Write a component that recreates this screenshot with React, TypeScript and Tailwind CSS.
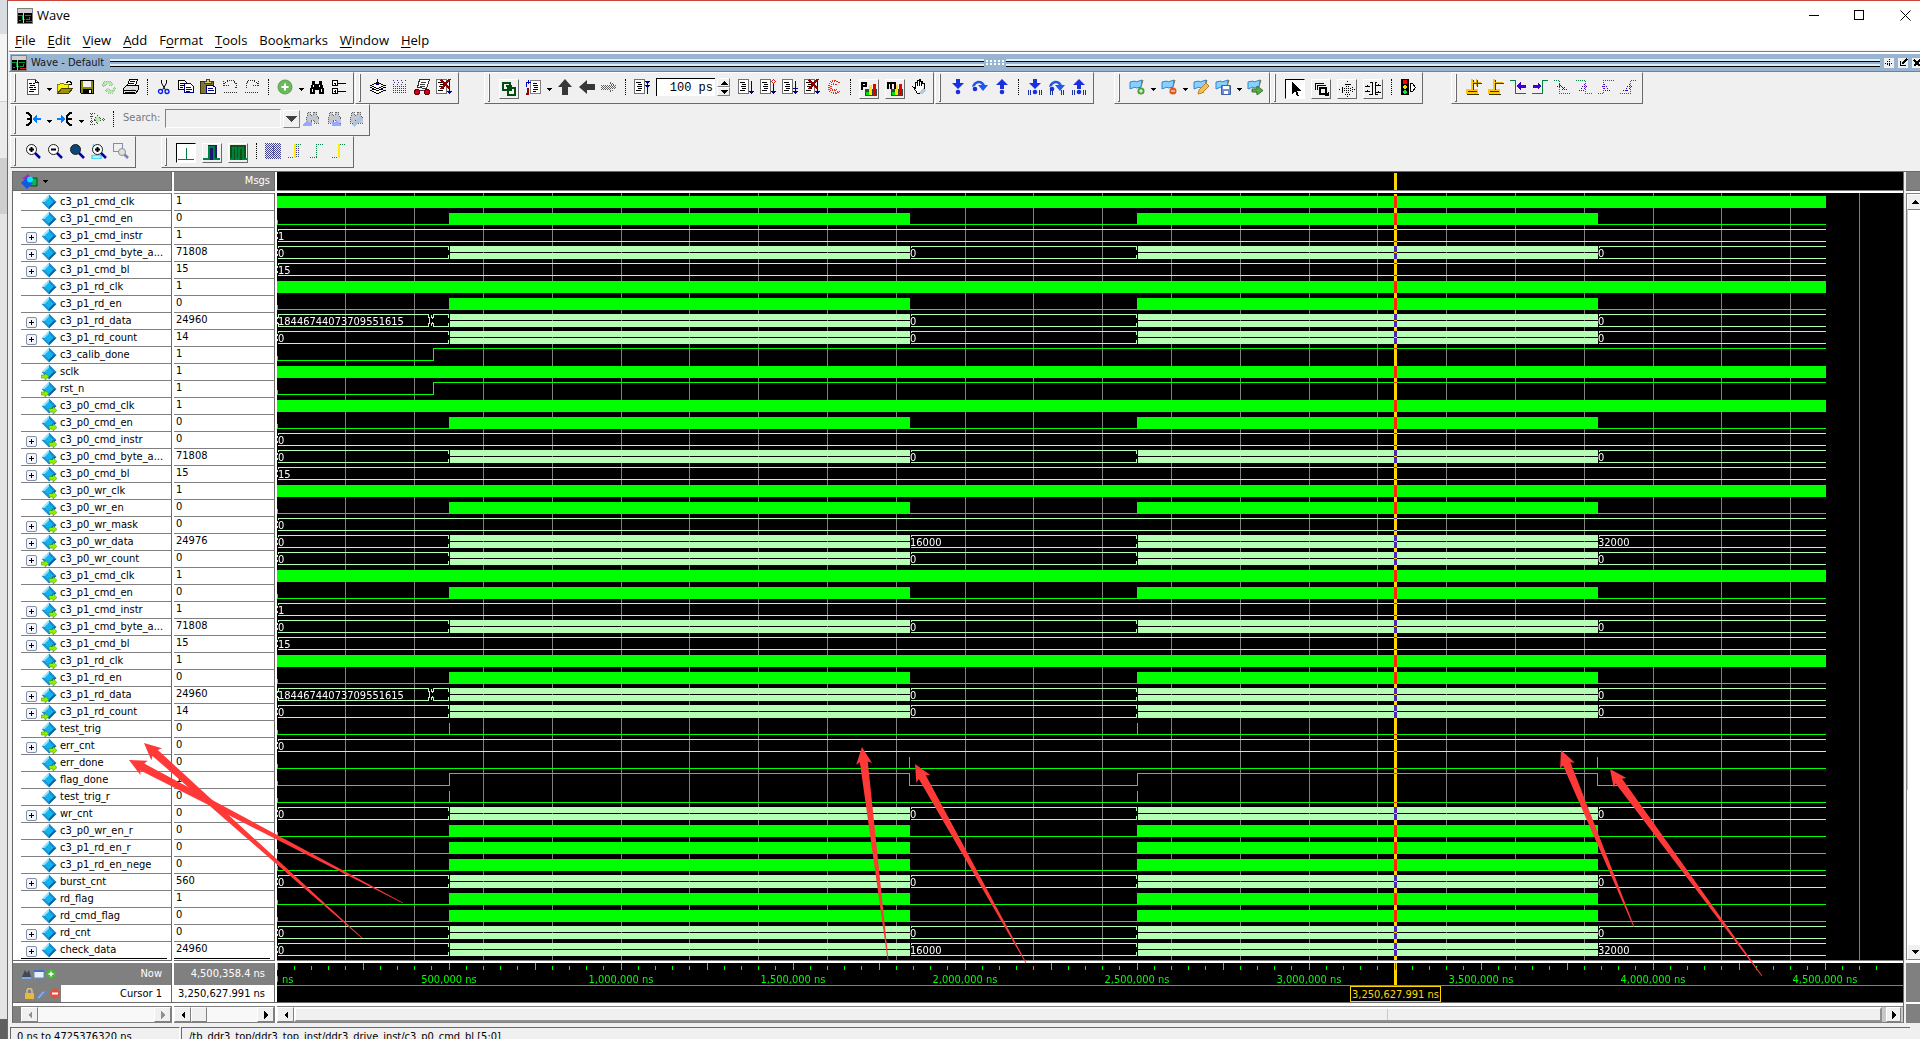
import type { ReactNode } from "react";

type Row = {
  name: string;
  value: string;
  kind: "clk" | "burst" | "const" | "bus" | "rddata" | "rise" | "trig" | "done" | "flag";
  dir?: "in" | "out";
  labels?: string[];
};

const ZERO = ["0", "0", "0"];

const ROWS: Row[] = [
  { name: "c3_p1_cmd_clk", value: "1", kind: "clk" },
  { name: "c3_p1_cmd_en", value: "0", kind: "burst" },
  { name: "c3_p1_cmd_instr", value: "1", kind: "const", labels: ["1"] },
  { name: "c3_p1_cmd_byte_a...", value: "71808", kind: "bus", labels: ZERO },
  { name: "c3_p1_cmd_bl", value: "15", kind: "const", labels: ["15"] },
  { name: "c3_p1_rd_clk", value: "1", kind: "clk" },
  { name: "c3_p1_rd_en", value: "0", kind: "burst" },
  { name: "c3_p1_rd_data", value: "24960", kind: "rddata", labels: ["18446744073709551615", "0", "0"] },
  { name: "c3_p1_rd_count", value: "14", kind: "bus", labels: ZERO },
  { name: "c3_calib_done", value: "1", kind: "rise" },
  { name: "sclk", value: "1", kind: "clk", dir: "in" },
  { name: "rst_n", value: "1", kind: "rise", dir: "in" },
  { name: "c3_p0_cmd_clk", value: "1", kind: "clk", dir: "out" },
  { name: "c3_p0_cmd_en", value: "0", kind: "burst", dir: "out" },
  { name: "c3_p0_cmd_instr", value: "0", kind: "const", dir: "out", labels: ["0"] },
  { name: "c3_p0_cmd_byte_a...", value: "71808", kind: "bus", dir: "out", labels: ZERO },
  { name: "c3_p0_cmd_bl", value: "15", kind: "const", dir: "out", labels: ["15"] },
  { name: "c3_p0_wr_clk", value: "1", kind: "clk", dir: "out" },
  { name: "c3_p0_wr_en", value: "0", kind: "burst", dir: "out" },
  { name: "c3_p0_wr_mask", value: "0", kind: "const", dir: "out", labels: ["0"] },
  { name: "c3_p0_wr_data", value: "24976", kind: "bus", dir: "out", labels: ["0", "16000", "32000"] },
  { name: "c3_p0_wr_count", value: "0", kind: "bus", dir: "in", labels: ZERO },
  { name: "c3_p1_cmd_clk", value: "1", kind: "clk", dir: "out" },
  { name: "c3_p1_cmd_en", value: "0", kind: "burst", dir: "out" },
  { name: "c3_p1_cmd_instr", value: "1", kind: "const", dir: "out", labels: ["1"] },
  { name: "c3_p1_cmd_byte_a...", value: "71808", kind: "bus", dir: "out", labels: ZERO },
  { name: "c3_p1_cmd_bl", value: "15", kind: "const", dir: "out", labels: ["15"] },
  { name: "c3_p1_rd_clk", value: "1", kind: "clk", dir: "out" },
  { name: "c3_p1_rd_en", value: "0", kind: "burst", dir: "out" },
  { name: "c3_p1_rd_data", value: "24960", kind: "rddata", dir: "in", labels: ["18446744073709551615", "0", "0"] },
  { name: "c3_p1_rd_count", value: "14", kind: "bus", dir: "in", labels: ZERO },
  { name: "test_trig", value: "0", kind: "trig", dir: "in" },
  { name: "err_cnt", value: "0", kind: "const", dir: "out", labels: ["0"] },
  { name: "err_done", value: "0", kind: "done", dir: "out" },
  { name: "flag_done", value: "1", kind: "flag" },
  { name: "test_trig_r", value: "0", kind: "trig" },
  { name: "wr_cnt", value: "0", kind: "bus", labels: ZERO },
  { name: "c3_p0_wr_en_r", value: "0", kind: "burst" },
  { name: "c3_p1_rd_en_r", value: "0", kind: "burst" },
  { name: "c3_p1_rd_en_nege", value: "0", kind: "burst" },
  { name: "burst_cnt", value: "560", kind: "bus", labels: ZERO },
  { name: "rd_flag", value: "1", kind: "burst" },
  { name: "rd_cmd_flag", value: "0", kind: "burst" },
  { name: "rd_cnt", value: "0", kind: "bus", labels: ZERO },
  { name: "check_data", value: "24960", kind: "bus", labels: ["0", "16000", "32000"] },
];

const ROW_H = 17;
const END = 1549;
// burst windows, in pixels from the left edge of the wave pane
const BURSTS = [
  [172, 633],
  [860, 1321],
];
const GREEN = "#00ff00";
const PALE = "#b4ffb4";

/* ---------- icons ---------- */

function Ico({ children, w = 16, h = 16 }: { children: ReactNode; w?: number; h?: number }) {
  return (
    <svg width={w} height={h} viewBox={`0 0 ${w} ${h}`} fill="none" stroke="none" shapeRendering="crispEdges" aria-hidden="true">
      {children}
    </svg>
  );
}

const AppIcon = ({ bar = "#ffe000" }: { bar?: string }) => (
  <Ico>
    <path d="M0 0h16v16H0z" fill="#808080" />
    <path d="M1 1h14v4H1z" fill="#d0d0d0" />
    <path d="M1 5h14v10H1z" fill="#000" />
    <path d="M1 7.500h4v4h3M8 7.500h6M9 11.500h3v-3M2 12.500h2" stroke="#00a030" />
    <path d="M6.500 5v10" stroke={bar} />
    <path d="M9 13.500h6" stroke="#d02020" />
  </Ico>
);

const NewDoc = () => (
  <Ico>
    <path d="M2.500.5h8l3 3v12h-11z" fill="#fff" stroke="#606060" />
    <path d="M10.500.5v3h3" stroke="#000" />
    <path d="M4 4.500h3M8 4.500h2M5 6.500h5M4 8.500h4M9 8.500h2M5 10.500h6M4 12.500h5" stroke="#000" />
  </Ico>
);
const Open = () => (
  <Ico>
    <path d="M.5 14.500v-9h2l1-1h3l1 1h4v4" fill="#fff200" stroke="#808000" />
    <path d="M.5 14.500l4-5h11l-4 5z" fill="#a09000" stroke="#404000" />
    <path d="M9 3.500h1v-1h3v1h1v2M12 5.500h3" stroke="#000" />
  </Ico>
);
const Save = () => (
  <Ico>
    <path d="M1.500 1.500h13v13h-12l-1-1z" fill="#8a8a00" stroke="#000" />
    <path d="M4 2h8v6H4z" fill="#f0f0f0" />
    <path d="M4 10h9v4H4z" fill="#000" />
    <path d="M10 11h2v3h-2z" fill="#fff" />
  </Ico>
);
const Reload = () => (
  <Ico>
    <path d="M1 6l3-4h5l3 3-3 2-2-2H5L3 8zM15 9l-3 5H7l-3-3 3-2 2 2h3l1-3z" fill="#bce4b6" stroke="#8cc884" strokeDasharray="1 1" />
  </Ico>
);
const Print = () => (
  <Ico>
    <path d="M4.500 6.500l2-6h8l-2 6" fill="#fff" stroke="#000" />
    <path d="M.5 9.500l3-3h12v4l-3 4h-12z" fill="#e0e0e0" stroke="#000" />
    <path d="M7 2.500h5M6 4.500h5M1 11.500h12M2 13.500h10" stroke="#000" />
    <path d="M8 10h4v1H8z" fill="#e8e000" />
  </Ico>
);
const Cut = () => (
  <svg width="16" height="16" viewBox="0 0 16 16" fill="none" aria-hidden="true">
    <path d="M5.500 1v3l4 7M10.500 1v3l-4 7" stroke="#000" />
    <circle cx="4.500" cy="12.500" r="2" stroke="#0020e0" strokeWidth="1.300" />
    <circle cx="11" cy="12.500" r="2" stroke="#0020e0" strokeWidth="1.300" />
  </svg>
);
const Copy = () => (
  <Ico>
    <path d="M.5 1.500h6l2 2v7h-8z" fill="#fff" stroke="#000" />
    <path d="M2 4.500h4M2 6.500h4M2 8.500h3" stroke="#000" />
    <path d="M6.500 4.500h6l3 3v6h-9z" fill="#fff" stroke="#000080" />
    <path d="M8 8.500h5M8 10.500h6M8 12.500h4" stroke="#000080" />
  </Ico>
);
const Paste = () => (
  <Ico>
    <path d="M.5 2.500h13v12H.5z" fill="#807830" stroke="#303000" />
    <path d="M4 4V2h2V0h3v2h2v2z" fill="#d8d070" stroke="#404040" />
    <path d="M6.500 6.500h6l3 2v6h-9z" fill="#fff" stroke="#000080" />
    <path d="M8 9.500h5M8 11.500h6" stroke="#000080" />
  </Ico>
);
const Undo = ({ flip = false }: { flip?: boolean }) => (
  <Ico>
    <g transform={flip ? "translate(16 0) scale(-1 1)" : undefined} stroke="#303030" strokeDasharray="1 1">
      <path d="M14.500 2v5M9 6.500h6M14 5l-4-3.500H5l-3 3v4l2 3" />
      <path d="M1 13.500h14" />
    </g>
  </Ico>
);
const AddRound = () => (
  <svg width="16" height="16" viewBox="0 0 16 16" aria-hidden="true">
    <circle cx="8" cy="8" r="7" fill="#6cb85c" stroke="#58a04c" />
    <path d="M8 4.500v7M4.500 8h7" stroke="#fff" strokeWidth="2" />
  </svg>
);
const Binoculars = () => (
  <Ico>
    <path d="M3 2h3v3h4V2h3v3l2 5v5h-5v-4H6v4H1v-5l2-5z" fill="#000" />
    <path d="M4.500 6v2M3.500 10v3M10.500 6v2M12.500 10v3" stroke="#fff" />
  </Ico>
);
const Tree = () => (
  <Ico>
    <path d="M1.500 1.500h5v5h-5zM1.500 9.500h5v5h-5z" fill="#fff" stroke="#000" />
    <path d="M3 4.500h2M4.500 3.500v2M3 12.500h2M4.500 11v3M7 4.500h8M7 12.500h8" stroke="#000" />
  </Ico>
);
const Layers = () => (
  <Ico>
    <path d="M.5 11.500l7-3 7 3-7 3z" fill="#fff" stroke="#000" />
    <path d="M.5 8.500l7-3 7 3-7 3z" fill="#fff" stroke="#000" />
    <path d="M.5 6.500l7-3 7 3-7 3z" fill="#fff" stroke="#000" />
    <path d="M7.500 0v6M5 4.500h5M6 5.500h3" stroke="#0000a0" />
  </Ico>
);
const Rain = () => (
  <Ico>
    <path d="M1 1.500h14M2 3.500h12M1 5.500h14" stroke="#303090" strokeDasharray="1 3" />
    <path d="M1 7.500h14M1 9.500h14M1 11.500h14M1 13.500h14" stroke="#404040" strokeDasharray="1 1" />
  </Ico>
);
const Cart = () => (
  <Ico>
    <path d="M3.500 8.500l2-8h10l-3 9z" fill="#fff" stroke="#303030" />
    <path d="M7 3.500h5M6 5.500h5M6 7.500h5M1 11.500h13" stroke="#404040" />
    <circle cx="3" cy="13" r="2.500" fill="#d00020" stroke="#600" />
    <circle cx="13" cy="13" r="2.500" fill="#d00020" stroke="#600" />
  </Ico>
);
const RunDoc = ({ mode = "plain" }: { mode?: "plain" | "dot" | "step" | "kill" | "up" }) => (
  <Ico>
    <path d="M.5.5h10v14H.5z" fill="#fff" stroke="#707070" />
    <path d="M2 3.500h5M4 5.500h4M3 7.500h5M4 9.500h4M2 11.500h5" stroke="#000" />
    <path d="M13.500 2v13" stroke="#000080" />
    {mode === "up" ? <path d="M11 2.500h5M12 3.500h3M11 6.500h5M12 7.500h3" stroke="#000080" /> : <path d="M11 12.500h5M12 13.500h3" stroke="#000080" />}
    {mode === "dot" && <path d="M13.500.5l2 2-2 2-2-2z" fill="#fff" stroke="#e02020" />}
    {mode === "step" && <path d="M11 9.500h5" stroke="#000080" />}
    {mode === "kill" && <path d="M5 1l9 9M14 0L5 10" stroke="#8c0000" strokeWidth="2" />}
  </Ico>
);
const Link2 = () => (
  <Ico>
    <path d="M2 2h7v7H2zM7 7h7v7H7zM5 5h5v5" stroke="#004c10" strokeWidth="2" />
  </Ico>
);
const RestartDoc = () => (
  <Ico>
    <path d="M5.500 1.500h10v13h-10z" fill="#fff" stroke="#808080" />
    <path d="M8 4.500h4M8 6.500h5M9 8.500h4M8 10.500h5M8 12.500h3" stroke="#000" />
    <path d="M1.500 8V3h4M3 1v4" stroke="#0000c0" />
    <path d="M1 14.500h2V9" stroke="#900000" strokeWidth="2" />
  </Ico>
);
const BigArrow = ({ turn }: { turn: string }) => (
  <svg width="16" height="16" viewBox="0 0 16 16" aria-hidden="true">
    <path transform={turn} d="M8 0l7 8h-4v8H5V8H1z" fill="#383838" />
  </svg>
);
const GreyArrow = () => (
  <Ico>
    <path d="M0 6.500h9M1 7.500h13M0 8.500h16M1 9.500h13M0 10.500h9M9 3.500h2M9 4.500h3M10 5.500h4M9 11.500h4M9 12.500h2M10 6.500h5" stroke="#606060" strokeDasharray="1 1" />
  </Ico>
);
const Stop = () => (
  <Ico>
    <path d="M13 4a6 6 0 1 0 0 8M10 6a3 3 0 1 0 0 4" stroke="#e03020" strokeWidth="2" strokeDasharray="1 1" />
  </Ico>
);
const Profile = ({ mem = false }: { mem?: boolean }) => (
  <Ico>
    <path d="M4 8h12v7H4z" fill="#404040" />
    <path d="M5 11h3v3H5z" fill="#00e000" />
    <path d="M8 4h3v10H8z" fill="#f8e800" />
    <path d="M12 3h3v11h-3z" fill="#e00000" />
    {mem ? <path d="M1 8V2h3v6M4 2h4v6" stroke="#000" strokeWidth="2" /> : <path d="M1 9V2h4v3H1" stroke="#000" strokeWidth="2" />}
  </Ico>
);
const Hand = () => (
  <Ico>
    <path d="M2.500 8.500l2 1v-6h2v-2h2v-1h1v2h2v2h2v6l-2 4h-5z" fill="#fff" stroke="#000" />
    <path d="M6.500 3v4M8.500 2v5M10.500 3v4" stroke="#000" />
    <path d="M7 14l5-5 3 3-4 3z" fill="#b0c8e8" />
  </Ico>
);
const Step = ({ kind, bars = false }: { kind: "in" | "over" | "out"; bars?: boolean }) => (
  <svg width="16" height="16" viewBox="0 0 16 16" fill="#1830e0" aria-hidden="true">
    {kind === "in" && <path d="M6 0h4v4h4L8 10 2 4h4z" />}
    {kind === "out" && <path d="M6 10h4V6h4L8 0 2 6h4z" />}
    {kind === "over" && <path d="M0 8C1 1 10-1 13 6h3l-5 6-5-6h4C8 3 4 4 3 7z" fill="#2058e8" />}
    <circle cx={kind === "over" ? 3 : 8} cy={kind === "over" ? 10 : 13} r="2.300" />
    {bars && <path d="M1.500 11v5M3.500 11v5M12.500 11v5M14.500 11v5" stroke="#1830a0" />}
  </svg>
);
const Flag = ({ badge }: { badge: "add" | "del" | "edit" | "save" | "go" }) => (
  <svg width="16" height="16" viewBox="0 0 16 16" aria-hidden="true">
    <path d="M13.500 1l-4 13" stroke="#a07020" strokeWidth="2" />
    <path d="M1 3l5-1 1 1 6-2-1 7-5 1-1-1-5 2z" fill="#88d0ff" stroke="#3088d0" />
    {badge === "add" && <><circle cx="12" cy="12" r="3.500" fill="#48a030" /><path d="M12 10v4M10 12h4" stroke="#fff" /></>}
    {badge === "del" && <><circle cx="12" cy="12" r="3.500" fill="#e05820" /><path d="M10 12h4" stroke="#fff" /></>}
    {badge === "edit" && <path d="M5 15l1-4 7-7 3 3-7 7z" fill="#f0c060" stroke="#c08020" />}
    {badge === "save" && <><path d="M6.500 6.500h9v9h-9z" fill="#7090d8" stroke="#4060a0" /><path d="M8 7h6v3H8zM9 12h4v3H9z" fill="#fff" /></>}
    {badge === "go" && <path d="M5 10h5V7l6 4.500-6 4.500v-3H5z" fill="#60a850" stroke="#307828" />}
  </svg>
);
const Pointer = () => (
  <Ico>
    <path d="M5 1v12l3-3 2 5h2l-2-5h4z" fill="#000" />
  </Ico>
);
const ZoomMode = () => (
  <Ico>
    <path d="M2.500 9V2.500H11M4.500 9V4.500H13" stroke="#000" />
    <path d="M7 7h6v6H7z" stroke="#000" strokeWidth="2" />
    <path d="M11 15h5v-5z" fill="#000" />
  </Ico>
);
const PanMode = () => (
  <Ico>
    <path d="M8.500 0L6 3h5zM8.500 16L6 13h5zM0 8.500L3 6v5zM16 8.500L13 6v5zM7.500 3v10M9.500 3v10M3 7.500h10M3 9.500h10" stroke="#000" strokeDasharray="1 1" />
  </Ico>
);
const EditMode = () => (
  <Ico>
    <path d="M5 1.500h2v12H4M12 1.500h-2v12h3" stroke="#000" />
    <path d="M0 5.500h5M0 10.500h5M2.500 4v3M2.500 9v3M11 4.500h5M11 11.500h5M13.500 3v3M13.500 10v3" stroke="#000" strokeDasharray="2 1" />
  </Ico>
);
const Traffic = () => (
  <Ico>
    <path d="M1 0h8v16H1z" fill="#000" />
    <circle cx="5" cy="3" r="2.500" fill="#f00" />
    <path d="M3 8h4M5 6v4" stroke="#f0e000" strokeWidth="2" />
    <path d="M3 13h4M5 11v4" stroke="#00f040" strokeWidth="2" />
    <path d="M10.500 4.500h2l3 4-3 4h-2z" fill="#fff" stroke="#000" />
  </Ico>
);
const CursorTool = ({ minus = false }: { minus?: boolean }) => (
  <Ico>
    <path d="M6 0v11M1 11h10v3H1z" stroke="#ffc800" strokeWidth="2" />
    <path d="M7.500 1v10M1 15.500h12M2 12.500h9" stroke="#403000" />
    <path d={minus ? "M7 3.500h8" : "M7 3.500h8M10.500 0v7"} stroke="#e0b000" />
    <path d={minus ? "M8 4.500h8" : "M8 4.500h8M11.500 1v7"} stroke="#504000" />
  </Ico>
);
const EdgeTool = ({ d, arrow, solid = false }: { d: string; arrow: string; solid?: boolean }) => (
  <Ico>
    <path d={d} stroke="#008040" strokeDasharray={solid ? undefined : "1 1"} />
    <path d={arrow} fill={solid ? "#4000e0" : "none"} stroke="#4000c0" strokeDasharray={solid ? undefined : "1 1"} />
  </Ico>
);
const Merge = ({ flip = false }: { flip?: boolean }) => (
  <Ico>
    <path d={flip ? "M15 2h-2l-3 3v6l3 3h2M10 8h5" : "M1 2h2l3 3v6l-3 3H1M6 8H2"} stroke="#000" strokeWidth="2" />
    <path d={flip ? "M0 7h4V4l5 4-5 4V9H0z" : "M16 7h-4V4L7 8l5 4V9h4z"} fill="#0080ff" />
  </Ico>
);
const Spread = () => (
  <Ico>
    <path d="M1 2.500h6M1 5.500h4M1 10.500h4M1 13.500h6M2.500 3v10" stroke="#404040" strokeDasharray="1 1" />
    <path d="M8.500 4.500l3.500 4-3.500 4-3.500-4z" fill="#b8e8b0" stroke="#306030" strokeDasharray="1 1" />
    <path d="M13 8.500h3M14.500 7v3" stroke="#4040e0" strokeDasharray="1 1" />
  </Ico>
);
const FindGrey = ({ side }: { side: "l" | "r" | "t" }) => (
  <Ico>
    <path d="M5 1h2v3h3V1h3l3 8v3h-5V9H8v3H3V9z" fill="#c4c8cc" stroke="#606468" strokeDasharray="1 1" />
    {side === "l" && <path d="M0 13l5-4v2h4v4H0z" fill="#98a8ff" />}
    {side === "r" && <path d="M16 13l-5-4v2H7v4h9z" fill="#98a8ff" />}
    {side === "t" && <path d="M5 14l8-9 3 2-8 9z" fill="#b0c4e0" />}
  </Ico>
);
const Lens = ({ mode }: { mode: "in" | "out" | "full" | "fit" | "area" }) => (
  <svg width="16" height="16" viewBox="0 0 16 16" fill="none" aria-hidden="true">
    {mode === "area" && <path d="M.5.5h9v8h-9z" stroke="#202080" strokeDasharray="1 1" />}
    {mode === "fit" && <path d="M1 12.500h9v3H1zM2.500 1v6" stroke="#40e0f8" strokeWidth="1.500" />}
    <path d="M10 10l5 5" stroke={mode === "area" ? "#7080c0" : "#0000b0"} strokeWidth="2.500" />
    <circle
      cx={mode === "area" ? 9 : 6.5}
      cy={mode === "area" ? 9 : 6.5}
      r={mode === "area" ? 3.5 : 5}
      fill={mode === "full" ? "#084878" : mode === "area" ? "#e0e0e0" : "#fff"}
      stroke={mode === "area" ? "#909090" : "#202020"}
    />
    {mode !== "full" && mode !== "area" && <path d={mode === "out" ? "M4 6.500h5" : "M4 6.500h5M6.500 4v5"} stroke="#000" strokeWidth="2" />}
  </svg>
);
const Pulse = ({ fill, d }: { fill?: string; d: string }) => (
  <Ico w={18} h={18}>
    {fill && <path d={fill === "#105010" ? "M1 1h16v15H1z" : "M5 1h9v15H5z"} fill={fill} />}
    <path d={d} stroke="#008040" strokeWidth={fill ? 2 : 1} />
  </Ico>
);
const Virtual = () => (
  <Ico>
    {[0, 2, 4, 6, 8, 10, 12, 14].map((y) => (
      <path key={y} d={`M0 ${y}.5h16M1 ${y + 1}.5h15`} stroke="#404090" strokeDasharray="1 1" />
    ))}
    <path d="M8.500 3v10" stroke="#40a060" strokeDasharray="1 1" />
  </Ico>
);
const EdgeSmall = ({ color, dots = false }: { color: string; dots?: boolean }) => (
  <Ico>
    <path d="M1 14.500h7M9 1.500h6" stroke="#008040" strokeDasharray="1 1" />
    <path d="M7.500 1v14" stroke={color} strokeWidth={color === "#ffee00" ? 2 : 1} strokeDasharray={color === "#ffee00" ? undefined : "1 1"} />
    {dots && <path d="M9.500 3v11M11.500 3v11" stroke="#404090" strokeDasharray="1 1" />}
  </Ico>
);

function Diamond({ dir }: { dir?: "in" | "out" }) {
  return (
    <svg width="16" height="16" viewBox="0 0 16 16" className="block shrink-0" aria-hidden="true">
      <path d="M8 .5L.5 8H8z" fill="#9ce0f8" />
      <path d="M8 .5L15.500 8H8z" fill="#1888c8" />
      <path d="M.5 8L8 15.500V8z" fill="#2090d0" />
      <path d="M15.500 8L8 15.500V8z" fill="#086098" />
      <path d="M8 3.500L12.500 8 8 12.500 3.500 8z" fill="#10b4f0" />
      {dir === "in" && <path d="M0 11h4V9l4 3.500L4 16v-2H0z" fill="#90f000" stroke="#388800" strokeWidth=".5" />}
      {dir === "out" && <path d="M8 10.500h4V8.500l4 4-4 3.500V14H8z" fill="#90f000" stroke="#388800" strokeWidth=".5" />}
    </svg>
  );
}

/* ---------- toolbar parts ---------- */

function Toolbar({ children, className = "" }: { children: ReactNode; className?: string }) {
  return (
    <div className={`flex h-8 shrink-0 items-start border-t border-l border-t-white border-l-white border-r border-b border-r-[#696969] border-b-[#696969] pr-[3px] ${className}`}>
      <div className="mt-px mr-[6px] ml-[3px] h-7 w-[2px] border-r border-b border-[#696969] bg-white" />
      {children}
    </div>
  );
}

function Tool({ label, children }: { label: string; children: ReactNode }) {
  return (
    <button type="button" aria-label={label} className="flex h-7 w-[22px] items-center justify-center">
      {children}
    </button>
  );
}

function Boxed({ label, pressed = false, children }: { label: string; pressed?: boolean; children: ReactNode }) {
  return (
    <div className="flex h-8 w-[26px] items-center justify-center">
      <button
        type="button"
        aria-label={label}
        className={`flex size-5 items-center justify-center border ${
          pressed ? "border-t-black border-l-black border-r-white border-b-white bg-white" : "border-t-white border-l-white border-r-[#696969] border-b-[#696969]"
        }`}
      >
        {children}
      </button>
    </div>
  );
}

function Caret() {
  return (
    <button type="button" aria-label="More" className="flex h-8 w-[10px] items-center justify-center">
      <Ico w={5} h={3}>
        <path d="M0 0h5v1H4v1H3v1H2V2H1V1H0z" fill="#000" />
      </Ico>
    </button>
  );
}

const Sep = () => (
  <div className="flex h-7 w-[11px] items-center justify-center">
    <div className="h-4 border-l border-dotted border-black" />
  </div>
);

function ScrollButton({ label, d, muted = false, className = "" }: { label: string; d: string; muted?: boolean; className?: string }) {
  return (
    <button type="button" aria-label={label} className={`flex shrink-0 items-center justify-center border border-t-white border-l-white border-r-[#808080] border-b-[#808080] bg-[#f0f0f0] ${className}`}>
      <Ico w={8} h={8}>
        <path d={d} fill={muted ? "#909090" : "#000"} />
      </Ico>
    </button>
  );
}

const LEFT = "M2 4l4-4v8z";
const RIGHT = "M6 4L2 0v8z";
const UP = "M0 6h8L4 2z";
const DOWN = "M0 2h8L4 6z";

/* ---------- wave drawing ---------- */

function BusSegment({ from, to, y, open = false }: { from: number; to: number; y: number; open?: boolean }) {
  const edge = open ? "" : `M${to - 0.5} ${y + 3}v3M${to - 0.5} ${y + 11}v3`;
  return (
    <path
      d={`M${from + 1} ${y + 2.5}H${to}M${from + 1} ${y + 14.5}H${to}M${from + 1.5} ${y + 3}v3M${from + 1.5} ${y + 11}v3M${from + 0.5} ${y + 5}v2M${from + 0.5} ${y + 10}v2${edge}`}
      stroke={PALE}
    />
  );
}

function WaveLabel({ x, y, text }: { x: number; y: number; text: string }) {
  return (
    <>
      {text.length < 10 && <rect x={x} y={y + 4} width={text.length * 6 + 1} height="10" fill="#000" />}
      <text x={x} y={y + 13} fill="#fff" fontSize="11">
        {text}
      </text>
    </>
  );
}

function WaveRow({ row, y }: { row: Row; y: number }) {
  const labels = row.labels ?? [];
  const start = `M.5 ${y + 10}v4`;
  const low = y + 14.5;
  const high = y + 2.5;

  if (row.kind === "clk") {
    return <rect x="0" y={y + 3} width={END} height="12" fill={GREEN} />;
  }
  if (row.kind === "burst") {
    return (
      <>
        <path d={`${start}M0 ${low}H${END}`} stroke={GREEN} />
        {BURSTS.map(([a, b]) => (
          <rect key={a} x={a} y={y + 3} width={b - a} height="12" fill={GREEN} />
        ))}
      </>
    );
  }
  if (row.kind === "const") {
    return (
      <>
        <BusSegment from={0} to={END} y={y} open />
        <WaveLabel x={1} y={y} text={labels[0]} />
      </>
    );
  }
  if (row.kind === "bus" || row.kind === "rddata") {
    return (
      <>
        {row.kind === "bus" ? (
          <BusSegment from={0} to={172} y={y} />
        ) : (
          <>
            <BusSegment from={0} to={152} y={y} />
            <BusSegment from={155} to={172} y={y} />
            <path d={`M152.500 ${y + 5}v7M154 ${y + 3}v3M154 ${y + 11}v3`} stroke={PALE} />
          </>
        )}
        <BusSegment from={633} to={860} y={y} />
        <BusSegment from={1321} to={END} y={y} open />
        {BURSTS.map(([a, b]) => (
          <g key={a} fill={PALE}>
            <rect x={a + 1} y={y + 2} width={b - a - 1} height="6" />
            <rect x={a + 1} y={y + 9} width={b - a - 1} height="6" />
          </g>
        ))}
        <WaveLabel x={1} y={y} text={labels[0]} />
        <WaveLabel x={633} y={y} text={labels[1]} />
        <WaveLabel x={1321} y={y} text={labels[2]} />
      </>
    );
  }
  if (row.kind === "rise") {
    return <path d={`${start}M0 ${low}H156.500V${high}H${END}`} stroke={GREEN} />;
  }
  if (row.kind === "flag") {
    return <path d={`${start}M0 ${low}H172.500V${high}H632.500V${low}H860.500V${high}H1320.500V${low}H${END}`} stroke={GREEN} />;
  }
  const spikes = row.kind === "trig" ? [172, 860] : [632, 1320];
  return <path d={`${start}M0 ${low}H${END}${spikes.map((s) => `M${s}.5 ${y + 3}v12`).join("")}`} stroke={GREEN} />;
}

function WaveChart() {
  return (
    <svg className="isolate block h-[767px] w-full bg-black" fill="none" shapeRendering="crispEdges" role="img" aria-label="Signal waveforms">
      {Array.from({ length: 23 }, (_, i) => (
        <rect key={i} x={Math.floor(68.8 * (i + 1))} y="0" width="1" height="767" fill="#808080" />
      ))}
      {ROWS.map((row, i) => (
        <WaveRow key={i} row={row} y={i * ROW_H} />
      ))}
      <rect x="1117" y="1" width="3" height="766" fill="#ffd700" className="mix-blend-difference" />
    </svg>
  );
}

function Ruler() {
  return (
    <svg className="isolate block h-[22px] w-full bg-black" shapeRendering="crispEdges" role="img" aria-label="Time scale">
      {Array.from({ length: 94 }, (_, i) => (
        <rect key={i} x={Math.floor(17.2 * i)} y={i % 5 === 0 ? 0 : 3} width="1" height={i % 5 === 0 ? 7 : 4} fill={GREEN} />
      ))}
      {Array.from({ length: 10 }, (_, i) => (
        <text key={i} x={i === 0 ? 6 : 172 * i} y="20" textAnchor="middle" fontSize="11" fill={GREEN}>
          {(500000 * i).toLocaleString("en-US")} ns
        </text>
      ))}
      <rect x="1117" y="0" width="3" height="22" fill="#ffd700" className="mix-blend-difference" />
    </svg>
  );
}

// tip x, tip y, tail x, tail y
const ARROWS = [
  [129, 760, 403, 903],
  [144, 743, 362, 938],
  [862, 747, 888, 960],
  [915, 764, 1026, 963],
  [1561, 750, 1634, 927],
  [1610, 769, 1762, 976],
];

function Arrow({ tip, tail }: { tip: number[]; tail: number[] }) {
  const dx = tail[0] - tip[0];
  const dy = tail[1] - tip[1];
  const len = Math.hypot(dx, dy);
  const at = (along: number, side: number) =>
    `${tip[0] + (dx * along - dy * side) / len},${tip[1] + (dy * along + dx * side) / len}`;
  return (
    <polygon
      points={[at(0, 0), at(17, 8), at(15, 4), at(len, 0.4), at(len, -0.4), at(15, -4), at(17, -8)].join(" ")}
      fill="#ff3838"
    />
  );
}

/* ---------- page ---------- */

const MENUS: [string, string, string][] = [
  ["", "F", "ile"],
  ["", "E", "dit"],
  ["", "V", "iew"],
  ["", "A", "dd"],
  ["F", "o", "rmat"],
  ["", "T", "ools"],
  ["Boo", "k", "marks"],
  ["", "W", "indow"],
  ["", "H", "elp"],
];

function SignalTable() {
  return (
    <table className="w-[264px] table-fixed border-separate border-spacing-0 bg-white">
      <thead>
        <tr className="h-[21px] align-top">
          <th className="w-[161px] p-0 font-normal">
            <div className="mr-[2px] flex h-[19px] items-center border-r border-b border-[#696969] bg-[#808080] pl-2">
              <svg width="17" height="16" viewBox="0 0 17 16" aria-label="Objects">
                <path d="M1 6l6-5 4 5z" fill="#b020c0" />
                <path d="M9 5h7v8H9z" fill="#18b048" stroke="#084818" />
                <path d="M6 4l6 6-6 6-6-6z" fill="#1058e8" />
                <circle cx="9" cy="6.500" r="3" fill="#00e8ff" />
              </svg>
              <div className="ml-[2px]">
                <Caret />
              </div>
            </div>
          </th>
          <th className="w-[103px] p-0 font-normal">
            <div className="mr-[2px] h-[19px] border-r border-b border-[#696969] bg-[#808080] pr-1 text-right leading-[18px] text-white">Msgs</div>
          </th>
        </tr>
      </thead>
      <tbody>
        {ROWS.map((row, i) => (
          <tr key={i} className="h-[17px]">
            <td className="p-0">
              <div className="mr-[2px] h-[17px] border-r border-[#696969] pl-2">
                <div className="flex h-4 items-center border-t border-[#808080]">
                  <div className="flex w-5 shrink-0 items-center pl-[5px]">
                    {row.labels && (
                      <button type="button" aria-label={`Expand ${row.name}`} className="mt-[3px] flex size-[11px] items-center justify-center rounded-xs border border-[#8090a8] bg-[#f4f4fa]">
                        <Ico w={5} h={5}>
                          <path d="M0 2h5v1H0zM2 0h1v5H2z" fill="#000" />
                        </Ico>
                      </button>
                    )}
                  </div>
                  <Diamond dir={row.dir} />
                  <span className="ml-[3px] leading-[13px] whitespace-nowrap">{row.name}</span>
                </div>
              </div>
            </td>
            <td className="p-0">
              <div className="mr-[2px] h-[17px] border-t border-r border-t-[#808080] border-r-[#696969] pl-[2px] leading-[14px]">{row.value}</div>
            </td>
          </tr>
        ))}
      </tbody>
      <tfoot>
        <tr className="h-[5px]">
          <td className="p-0">
            <div className="mr-[2px] h-[3px] border-r border-b border-[#696969] pr-1 pl-2">
              <div className="h-px bg-black" />
            </div>
            <div className="h-[2px]" />
          </td>
          <td className="p-0">
            <div className="mr-[2px] h-[3px] border-r border-b border-[#696969] pr-1">
              <div className="h-px bg-black" />
            </div>
            <div className="h-[2px]" />
          </td>
        </tr>
        <tr className="h-[22px] text-white">
          <td className="p-0">
            <div className="mr-[2px] flex h-[22px] items-center justify-between border-r border-[#696969] bg-[#808080] pr-[9px] pl-2">
              <svg width="36" height="12" viewBox="0 0 36 12" aria-hidden="true">
                <path d="M1 9l3-7 2 3 2-3 2 7z" fill="#404858" />
                <path d="M1 10h9" stroke="#80a8e0" strokeWidth="2" />
                <path d="M13 2h10v8H13z" fill="#e8f0ff" stroke="#6088c8" />
                <path d="M13 2h10v2H13z" fill="#4070c0" />
                <circle cx="30" cy="6" r="5" fill="#50b040" />
                <path d="M30 3.500v5M27.500 6h5" stroke="#fff" strokeWidth="1.500" />
              </svg>
              <span>Now</span>
            </div>
          </td>
          <td className="p-0">
            <div className="mr-[2px] h-[22px] border-r border-[#696969] bg-[#808080] pr-[9px] text-right leading-[22px] whitespace-nowrap">4,500,358.4 ns</div>
          </td>
        </tr>
        <tr className="h-[17px]">
          <td className="p-0">
            <div className="mr-[2px] flex h-[17px] items-center border-r border-[#696969]">
              <div className="flex h-full w-12 items-center bg-[#808080] pl-[10px]">
                <svg width="38" height="12" viewBox="0 0 38 12" aria-hidden="true">
                  <path d="M4 6V3a2.500 2.500 0 0 1 5 0v2" fill="none" stroke="#d8c080" strokeWidth="1.500" />
                  <path d="M2 5h9v6H2z" fill="#e8b840" />
                  <path d="M14 10l6-7 4 1-3 1-5 6z" fill="#90b0f0" stroke="#6088d0" />
                  <circle cx="32" cy="5.500" r="5" fill="#e05040" />
                  <path d="M29 5.500h6" stroke="#fff" strokeWidth="2" />
                </svg>
              </div>
              <span className="flex-1 pt-px pr-[9px] text-right">Cursor 1</span>
            </div>
          </td>
          <td className="p-0">
            <div className="mr-[2px] h-[17px] border-r border-[#696969] pt-px pr-[9px] text-right leading-4 whitespace-nowrap">3,250,627.991 ns</div>
          </td>
        </tr>
      </tfoot>
    </table>
  );
}

export default function App() {
  return (
    <div className="relative flex h-screen overflow-hidden bg-[#f0f0f0] font-['DejaVu_Sans_Condensed','DejaVu_Sans',sans-serif] text-[11px] text-black">
      <div className="flex w-[7px] shrink-0 flex-col">
        <div className="h-[34px] bg-[#d9dde1]" />
        <div className="h-[68px] border-b border-[#d0d0d0] bg-[#f4f4f4]" />
        <div className="h-14 bg-[#ebebeb]" />
        <div className="h-14 bg-[#cfcfcf]" />
        <div className="flex-1 bg-[#e4e4e4]" />
        <div className="h-5 bg-[#606060]" />
      </div>

      <div className="flex min-w-0 flex-1 flex-col border-t border-l border-[#c8453a]">
        <header className="shrink-0 bg-white font-['Open_Sans','Noto_Sans',sans-serif] text-[13px]">
          <div className="flex h-[29px] items-center pl-[9px]">
            <AppIcon />
            <h1 className="ml-1">Wave</h1>
            <div className="ml-auto flex items-center pr-[9px]">
              <button type="button" aria-label="Minimize" className="mr-[34px]">
                <Ico w={11} h={11}><path d="M0 5h10v1H0z" fill="#000" /></Ico>
              </button>
              <button type="button" aria-label="Maximize" className="mr-[35px]">
                <Ico w={11} h={11}><path d="M.5.5h9v9h-9z" stroke="#000" /></Ico>
              </button>
              <button type="button" aria-label="Close">
                <svg width="11" height="11" viewBox="0 0 11 11" aria-hidden="true"><path d="M.5.5l10 10M10.500.5l-10 10" stroke="#000" /></svg>
              </button>
            </div>
          </div>
          <nav className="flex h-5 items-center gap-3 pl-[7px] leading-5">
            {MENUS.map(([pre, key, post]) => (
              <a key={pre + key + post} href="#menu">
                {pre}
                <span className="underline underline-offset-2">{key}</span>
                {post}
              </a>
            ))}
          </nav>
        </header>

        <div className="mt-px ml-px flex h-[21px] shrink-0 flex-col border-y border-[#808080]">
          <div className="h-[2px] shrink-0 bg-white" />
          <div className="ml-px flex flex-1 items-center bg-[#99b4d1] pl-px">
            <AppIcon bar="#40e0ff" />
            <span className="ml-1 leading-4 whitespace-nowrap text-[#101828]">Wave - Default</span>
            <div className="ml-[6px] h-2 flex-1">
              <div className="h-[3px] border-b border-black bg-[#dcf0fa]" />
              <div className="mt-[2px] h-[3px] border-b border-black bg-[#dcf0fa]" />
            </div>
            <div className="mx-[2px] h-[5px] w-[18px] border-y-2 border-dotted border-white" />
            <div className="h-2 flex-1">
              <div className="h-[3px] border-b border-black bg-[#dcf0fa]" />
              <div className="mt-[2px] h-[3px] border-b border-black bg-[#dcf0fa]" />
            </div>
            <div className="ml-1 flex gap-1">
              <button type="button" aria-label="Move pane" className="size-[10px] bg-[#f0f0f0]">
                <Ico w={10} h={10}><path d="M5 1v8M1 5h8M3 3.500h4M3 6.500h4" stroke="#000" strokeDasharray="1 1" /></Ico>
              </button>
              <button type="button" aria-label="Undock" className="size-[10px] bg-[#f0f0f0]">
                <Ico w={10} h={10}><path d="M9 1L4 6M2.500 3v4.500h5" stroke="#000" strokeWidth="1.500" /></Ico>
              </button>
              <button type="button" aria-label="Close pane" className="w-2 overflow-hidden bg-[#f0f0f0]">
                <Ico w={10} h={10}><path d="M2 2l6 6M8 2L2 8" stroke="#000" strokeWidth="2" /></Ico>
              </button>
            </div>
          </div>
        </div>

        <div className="ml-[2px] flex h-8 shrink-0">
          <Toolbar>
            <Tool label="New"><NewDoc /></Tool>
            <Caret />
            <Tool label="Open"><Open /></Tool>
            <Tool label="Save"><Save /></Tool>
            <Tool label="Reload"><Reload /></Tool>
            <Tool label="Print"><Print /></Tool>
            <Sep />
            <Tool label="Cut"><Cut /></Tool>
            <Tool label="Copy"><Copy /></Tool>
            <Tool label="Paste"><Paste /></Tool>
            <Tool label="Undo"><Undo flip /></Tool>
            <Tool label="Redo"><Undo /></Tool>
            <Sep />
            <Tool label="Add"><AddRound /></Tool>
            <Caret />
            <Tool label="Find"><Binoculars /></Tool>
            <Tool label="Collapse all"><Tree /></Tool>
          </Toolbar>
          <Toolbar className="ml-px">
            <Tool label="Compile"><Layers /></Tool>
            <Tool label="Compile all"><Rain /></Tool>
            <Tool label="Simulate"><Cart /></Tool>
            <Tool label="End simulation"><RunDoc mode="kill" /></Tool>
          </Toolbar>
          <Toolbar className="ml-[25px]">
            <Boxed label="Environment"><Link2 /></Boxed>
            <Tool label="Restart"><RestartDoc /></Tool>
            <Caret />
            <Tool label="Environment up"><BigArrow turn="rotate(0)" /></Tool>
            <Tool label="Back"><BigArrow turn="rotate(-90 8 8)" /></Tool>
            <Tool label="Forward"><GreyArrow /></Tool>
            <Sep />
            <Tool label="Restart simulation"><RunDoc mode="up" /></Tool>
            <div className="mt-[5px] flex w-[82px] pl-[3px]">
              <input aria-label="Run length" defaultValue="100 ps" className="h-[18px] w-[59px] border-t border-l border-black bg-white pr-[2px] text-right font-['Liberation_Mono',monospace] text-[12px] outline-none" />
              <div className="ml-[2px] flex flex-col">
                <ScrollButton label="Increase" d={UP} className="h-[9px] w-[13px]" />
                <ScrollButton label="Decrease" d={DOWN} className="h-[9px] w-[13px]" />
              </div>
            </div>
            <Tool label="Run"><RunDoc /></Tool>
            <Tool label="Continue run"><RunDoc mode="dot" /></Tool>
            <Tool label="Run all"><RunDoc mode="step" /></Tool>
            <Tool label="Break"><RunDoc mode="kill" /></Tool>
            <Tool label="Stop"><Stop /></Tool>
            <Sep />
            <Boxed label="Performance profile"><Profile /></Boxed>
            <Boxed label="Memory profile"><Profile mem /></Boxed>
            <Tool label="Edit breakpoints"><Hand /></Tool>
          </Toolbar>
          <Toolbar className="ml-px">
            <Tool label="Step into"><Step kind="in" /></Tool>
            <Tool label="Step over"><Step kind="over" /></Tool>
            <Tool label="Step out"><Step kind="out" /></Tool>
            <Sep />
            <Tool label="Step into current"><Step kind="in" bars /></Tool>
            <Tool label="Step over current"><Step kind="over" bars /></Tool>
            <Tool label="Step out current"><Step kind="out" bars /></Tool>
          </Toolbar>
          <Toolbar className="ml-5">
            <Tool label="Add bookmark"><Flag badge="add" /></Tool>
            <Caret />
            <Tool label="Delete bookmark"><Flag badge="del" /></Tool>
            <Caret />
            <Tool label="Manage bookmarks"><Flag badge="edit" /></Tool>
            <Tool label="Save bookmarks"><Flag badge="save" /></Tool>
            <Caret />
            <Tool label="Go to bookmark"><Flag badge="go" /></Tool>
          </Toolbar>
          <Toolbar>
            <Boxed label="Select mode" pressed><Pointer /></Boxed>
            <Boxed label="Zoom mode"><ZoomMode /></Boxed>
            <Boxed label="Pan mode"><PanMode /></Boxed>
            <Boxed label="Edit mode"><EditMode /></Boxed>
            <Sep />
            <Tool label="Stop drawing"><Traffic /></Tool>
          </Toolbar>
          <Toolbar className="ml-7">
            <Tool label="Insert cursor"><CursorTool /></Tool>
            <Tool label="Delete cursor"><CursorTool minus /></Tool>
            <Tool label="Previous transition"><EdgeTool solid d="M0 1.500h5.500v13H16" arrow="M7 7l3-3v2h5v2h-5v2z" /></Tool>
            <Tool label="Next transition"><EdgeTool solid d="M0 14.500h10.500v-13H16" arrow="M9 7L6 4v2H1v2h5v2z" /></Tool>
            <Tool label="Previous falling edge"><EdgeTool d="M0 1.500h5.500v13H16" arrow="M5 5l5 5M3 7h5M8 10h5M10 8v4" /></Tool>
            <Tool label="Next falling edge"><EdgeTool d="M0 1.500h9.500v13H16" arrow="M3 11h6M8 5v5M6 7h5M5 9v4" /></Tool>
            <Tool label="Previous rising edge"><EdgeTool d="M0 14.500h5.500v-13H16" arrow="M6 5v5M4 7h5M7 11h6M9 9v4" /></Tool>
            <Tool label="Next rising edge"><EdgeTool d="M0 14.500h10.500v-13H16" arrow="M3 11h6M9 5v5M7 7h5M6 9v4" /></Tool>
          </Toolbar>
        </div>

        <div className="ml-[2px] flex h-8 shrink-0">
          <Toolbar>
            <Tool label="Expand left"><Merge /></Tool>
            <Caret />
            <Tool label="Expand right"><Merge flip /></Tool>
            <Caret />
            <Tool label="Expand both"><Spread /></Tool>
            <Sep />
            <label htmlFor="search" className="ml-[4px] leading-[26px] text-[#787878]">
              Search:
            </label>
            <input id="search" className="mt-1 ml-[5px] h-[19px] w-[116px] border border-t-[#808080] border-l-[#808080] border-r-white border-b-white outline-none" />
            <button type="button" aria-label="Search history" className="mt-[5px] ml-[2px] flex h-[18px] w-[17px] items-center justify-center border border-t-white border-l-white border-r-[#808080] border-b-[#808080]">
              <Ico w={11} h={6}><path d="M0 .5h11M1 1.500h9M2 2.500h7M3 3.500h5M4 4.500h3M5 5.500h1" stroke="#404040" /></Ico>
            </button>
            <Tool label="Find previous"><FindGrey side="l" /></Tool>
            <Tool label="Find next"><FindGrey side="r" /></Tool>
            <Tool label="Search options"><FindGrey side="t" /></Tool>
          </Toolbar>
        </div>

        <div className="ml-[2px] flex h-8 shrink-0">
          <Toolbar>
            <Tool label="Zoom in"><Lens mode="in" /></Tool>
            <Tool label="Zoom out"><Lens mode="out" /></Tool>
            <Tool label="Zoom full"><Lens mode="full" /></Tool>
            <Tool label="Zoom on cursor"><Lens mode="fit" /></Tool>
            <Tool label="Zoom area"><Lens mode="area" /></Tool>
          </Toolbar>
          <Toolbar className="ml-[25px]">
            <Boxed label="Event mode" pressed><Pulse d="M1 15.500h16M9.500 4v11" /></Boxed>
            <Boxed label="Delta mode"><Pulse fill="#181870" d="M0 15h6V3h5v12h6" /></Boxed>
            <Boxed label="Full mode"><Pulse fill="#105010" d="M1 15h3V4h3v11h3V4h4v11h4" /></Boxed>
            <Sep />
            <Tool label="Expand all time"><Virtual /></Tool>
            <Tool label="Expand time at cursor"><EdgeSmall color="#ffee00" dots /></Tool>
            <Tool label="Collapse all time"><EdgeSmall color="#008040" /></Tool>
            <Tool label="Collapse time at cursor"><EdgeSmall color="#ffee00" /></Tool>
          </Toolbar>
        </div>

        <main className="mt-[3px] ml-1 flex shrink-0 border-t border-l border-[#696969]">
          <div className="w-[264px] shrink-0 bg-white">
            <SignalTable />
            <div className="flex h-[21px] border-t border-[#696969] pt-[3px]">
              <div className="mr-[2px] flex h-[17px] w-[159px] border-y border-r border-[#808080] bg-[#808080] pl-2">
                <ScrollButton label="Scroll names left" d={LEFT} muted className="w-[17px]" />
                <div className="flex-1 bg-[#f8f8f8]" />
                <ScrollButton label="Scroll names right" d={RIGHT} muted className="w-[17px]" />
              </div>
              <div className="flex h-[17px] w-[101px] border-y border-r border-[#808080] bg-[#f8f8f8]">
                <ScrollButton label="Scroll values left" d={LEFT} className="w-[17px]" />
                <div className="w-4 border border-t-white border-l-white border-r-[#808080] border-b-[#808080] bg-[#f0f0f0]" />
                <div className="flex-1" />
                <ScrollButton label="Scroll values right" d={RIGHT} className="w-[17px]" />
              </div>
            </div>
          </div>

          <div className="min-w-0 flex-1 border-r border-[#696969] bg-white">
            <div className="h-[19px] border-b border-[#808080] bg-black">
              <svg className="block h-[18px] w-full" shapeRendering="crispEdges" aria-hidden="true">
                <rect x="1117" y="1" width="3" height="17" fill="#ffd700" />
              </svg>
            </div>
            <div className="h-[2px]" />
            <WaveChart />
            <div className="mb-[2px] h-px bg-[#808080]" />
            <Ruler />
            <div className="relative h-[17px] border-t border-[#808080] bg-black">
              <div className="absolute top-0 left-[1073px] border border-[#ffd700] px-px pt-px leading-[13px] whitespace-nowrap text-[#ffd700]">3,250,627.991 ns</div>
            </div>
            <div className="flex h-[21px] border-t border-[#696969] pt-[3px]">
              <div className="flex h-[17px] flex-1 border-y border-[#808080] bg-[#c8c8c8] pr-[2px]">
                <ScrollButton label="Scroll waves left" d={LEFT} className="w-[17px]" />
                <div className="relative mr-1 flex-1 border-2 border-t-white border-l-white border-r-[#909090] border-b-[#909090] bg-[#f0f0f0]">
                  <div className="absolute inset-y-0 left-[1091px] w-px bg-[#ffd700]" />
                </div>
                <ScrollButton label="Scroll waves right" d={RIGHT} className="w-[15px]" />
              </div>
            </div>
          </div>

          <div className="ml-[2px] flex w-[14px] shrink-0 flex-col overflow-hidden bg-white">
            <div className="mb-[2px] h-[19px] border-b border-[#696969] bg-[#808080]" />
            <div className="flex h-[767px] flex-col border-t border-l border-[#808080]">
              <ScrollButton label="Scroll up" d={UP} className="h-4 w-[15px]" />
              <div className="h-[580px] border-l border-[#c8c8c8]" />
              <div className="flex-1" />
              <ScrollButton label="Scroll down" d={DOWN} className="h-4 w-[15px]" />
            </div>
            <div className="mt-[3px] h-[39px] bg-[#808080]" />
            <div className="mt-[2px] flex-1 bg-[#808080]" />
          </div>
        </main>

        <footer className="mt-1 ml-[2px] flex h-6 shrink-0 gap-px leading-[18px]">
          <div className="w-[170px] border-t border-l border-[#696969] border-r border-r-white pl-[6px] whitespace-nowrap">0 ns to 4725376320 ns</div>
          <div className="mr-[10px] flex-1 border-t border-l border-[#696969] pl-[7px] whitespace-nowrap">/tb_ddr3_top/ddr3_top_inst/ddr3_drive_inst/c3_p0_cmd_bl [5:0]</div>
        </footer>
      </div>

      <svg className="pointer-events-none absolute inset-0 size-full" aria-hidden="true">
        {ARROWS.map(([x1, y1, x2, y2]) => (
          <Arrow key={x1} tip={[x1, y1]} tail={[x2, y2]} />
        ))}
      </svg>
    </div>
  );
}
